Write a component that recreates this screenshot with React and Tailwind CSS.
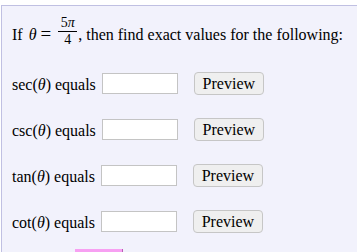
const rows = ["sec", "csc", "tan", "cot"];

function Row({ fn, first }) {
  return (
    <div className={`flex items-center h-[23px] pl-[10px] ${first ? "mt-[26px]" : "mt-[23px]"}`}>
      <span className="pt-[2px] text-[16px] leading-[18px] whitespace-nowrap">
        {fn}(<i>θ</i>) equals
      </span>
      <input
        type="text"
        className="ml-[6px] w-[76px] h-[21px] bg-white border border-[#c4c4c4] outline-none"
      />
      <button className="ml-[16px] w-[70px] h-[23px] rounded-[4px] bg-[#efefef] border border-[#c6c6c6] text-[16px] leading-[18px] text-black">
        Preview
      </button>
    </div>
  );
}

export default function App() {
  return (
    <div
      className="w-[357px] h-[252px] overflow-hidden bg-white pt-[5px] pl-[1px] text-black"
      style={{ fontFamily: '"Liberation Serif", "Times New Roman", serif' }}
    >
      <div className="w-[420px] h-[260px] bg-[#f2f2fc] border-t border-l border-[#c0c0e2]">
        {/* ── Prompt ── */}
        <div className="flex items-start pl-[10px] mt-[10px] whitespace-nowrap">
          <span className="mt-[10px] text-[16px] leading-[18px]">If</span>
          <span className="mt-[10px] ml-[6px] text-[16px] leading-[18px] italic">θ</span>
          <span className="mt-[8px] ml-[4px] text-[19px] leading-[20px]">=</span>
          <span className="ml-[7px] flex flex-col items-center w-[19px]">
            <span className="text-[14px] leading-[13px]">
              5<i>π</i>
            </span>
            <span className="mt-[2px] w-full h-px bg-black" />
            <span className="mt-[1px] text-[14px] leading-[13px]">4</span>
          </span>
          <span className="mt-[10px] ml-[1px] text-[16px] leading-[18px]">
            , then find exact values for the following:
          </span>
        </div>

        {/* ── Answer rows ── */}
        {rows.map((fn, i) => (
          <Row key={fn} fn={fn} first={i === 0} />
        ))}

        <div className="mt-[16px] ml-[73px] w-[48px] h-[10px] bg-[#f7a0f2] border-r border-[#b860b4]" />
      </div>
    </div>
  );
}
